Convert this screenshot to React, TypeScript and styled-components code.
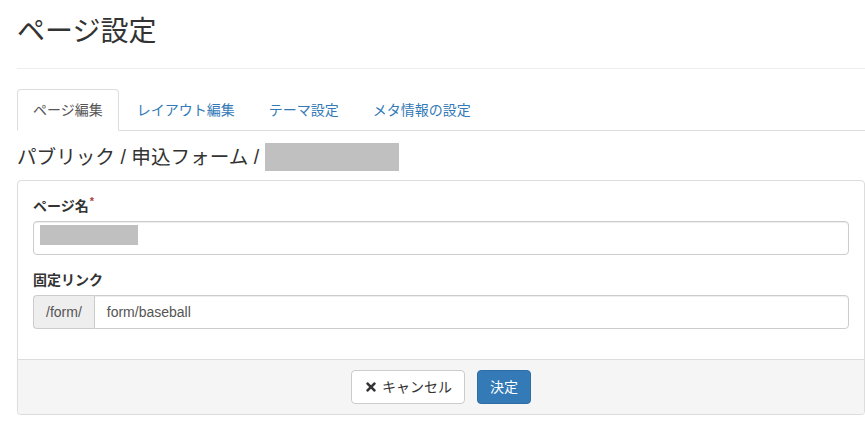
import styled, { createGlobalStyle } from "styled-components";
import { FaTimes } from "react-icons/fa";

const GlobalStyle = createGlobalStyle`
  * { box-sizing: border-box; }
  body {
    margin: 0;
    background: #fff;
    color: #333;
    font-family: "Liberation Sans", "Noto Sans CJK JP", sans-serif;
    font-size: 14px;
    line-height: 20px;
    overflow: hidden;
  }
`;

const tabs = ["ページ編集", "レイアウト編集", "テーマ設定", "メタ情報の設定"];

const App = () => {
  return (
    <Page>
      <GlobalStyle />
      <PageHeader>
        <Title>ページ設定</Title>
      </PageHeader>
      <TabBar>
        {tabs.map((t, i) => (
          <Tab key={t} active={i === 0}>
            {t}
          </Tab>
        ))}
      </TabBar>
      <Crumbs>
        パブリック / 申込フォーム / <Masked w={134} h={28} />
      </Crumbs>
      <Panel>
        <PanelBody>
          <FormGroup>
            <Label>
              ページ名<Req>*</Req>
            </Label>
            <Input>
              <Masked w={98} h={20} />
            </Input>
          </FormGroup>
          <FormGroup>
            <Label>固定リンク</Label>
            <InputGroup>
              <Addon>/form/</Addon>
              <GroupInput>form/baseball</GroupInput>
            </InputGroup>
          </FormGroup>
        </PanelBody>
        <PanelFooter>
          <Button>
            <FaTimes size={14} />
            キャンセル
          </Button>
          <Button primary>決定</Button>
        </PanelFooter>
      </Panel>
    </Page>
  );
};

const Page = styled.div`
  padding-left: 17px;
  width: 865px;
`;

const PageHeader = styled.div`
  padding-top: 14px;
  padding-bottom: 18px;
  border-bottom: 1px solid #eee;
  margin-bottom: 20px;
`;

const Title = styled.h1`
  margin: 0;
  font-size: 28px;
  line-height: 36px;
  font-weight: normal;
  color: #333;
`;

const TabBar = styled.div`
  display: flex;
  border-bottom: 1px solid #ddd;
`;

const Tab = styled.div<{ active?: boolean }>`
  margin-right: 2px;
  margin-bottom: -1px;
  padding: 10px 15px;
  line-height: 20px;
  border: 1px solid ${(p) => (p.active ? "#ddd" : "transparent")};
  border-bottom-color: ${(p) => (p.active ? "#fff" : "transparent")};
  border-radius: 4px 4px 0 0;
  background: ${(p) => (p.active ? "#fff" : "transparent")};
  color: ${(p) => (p.active ? "#555" : "#337ab7")};
`;

const Crumbs = styled.div`
  display: flex;
  align-items: center;
  white-space: pre;
  font-size: 19.6px;
  line-height: 28px;
  margin: 12px 0 9px;
  color: #333;
`;

const Masked = styled.span<{ w: number; h: number }>`
  display: inline-block;
  width: ${(p) => p.w}px;
  height: ${(p) => p.h}px;
  background: #c0c0c0;
`;

const Panel = styled.div`
  border: 1px solid #ddd;
  border-radius: 4px;
  background: #fff;
  box-shadow: 0 1px 1px rgba(0, 0, 0, 0.05);
`;

const PanelBody = styled.div`
  padding: 15px;
`;

const FormGroup = styled.div`
  margin-bottom: 15px;
`;

const Label = styled.div`
  font-weight: bold;
  margin-bottom: 5px;
`;

const Req = styled.sup`
  color: #a94442;
  font-size: 11px;
  line-height: 0;
  vertical-align: 6px;
  margin-left: 1px;
`;

const Input = styled.div`
  height: 34px;
  padding: 3px 6px;
  border: 1px solid #ccc;
  border-radius: 4px;
  box-shadow: inset 0 1px 1px rgba(0, 0, 0, 0.075);
`;

const InputGroup = styled.div`
  display: flex;
  height: 34px;
`;

const Addon = styled.div`
  padding: 6px 12px;
  background: #eee;
  color: #555;
  border: 1px solid #ccc;
  border-right: none;
  border-radius: 4px 0 0 4px;
`;

const GroupInput = styled.div`
  flex: 1;
  padding: 6px 12px;
  color: #555;
  border: 1px solid #ccc;
  border-radius: 0 4px 4px 0;
  box-shadow: inset 0 1px 1px rgba(0, 0, 0, 0.075);
`;

const PanelFooter = styled.div`
  display: flex;
  justify-content: center;
  gap: 12px;
  padding: 10px 15px;
  background: #f5f5f5;
  border-top: 1px solid #ddd;
  border-radius: 0 0 3px 3px;
`;

const Button = styled.button<{ primary?: boolean }>`
  display: flex;
  align-items: center;
  gap: 4px;
  height: 34px;
  padding: 6px 12px;
  font: inherit;
  border-radius: 4px;
  border: 1px solid ${(p) => (p.primary ? "#2e6da4" : "#ccc")};
  background: ${(p) => (p.primary ? "#337ab7" : "#fff")};
  color: ${(p) => (p.primary ? "#fff" : "#333")};
`;

export default App;
